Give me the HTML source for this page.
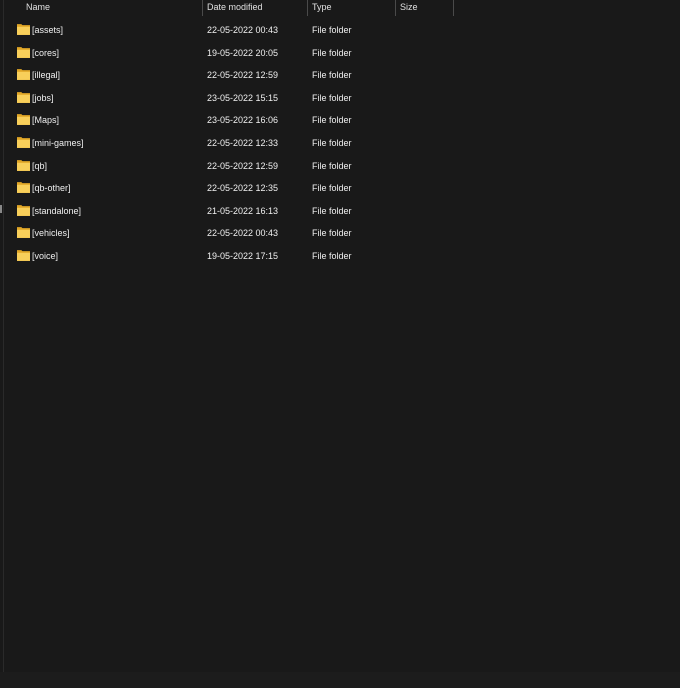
<!DOCTYPE html><html><head><style>
body{margin:0;width:680px;height:688px;background:#191919;overflow:hidden;position:relative;font-family:"Liberation Sans",sans-serif;font-size:9px;color:#f0f0f0}
.l{position:absolute;left:3px;top:0;width:1px;height:672px;background:#2a2a2a}
.b{position:absolute;left:0;top:672px;width:680px;height:16px;background:#1c1c1c}
.sep{position:absolute;top:0;width:1px;height:16px;background:#4a4a4a}
.h{position:absolute;top:2px;color:#e0e0e0}
.r{position:absolute;left:0;width:680px;height:22px}
.r span{position:absolute;top:0;line-height:22px}
.f{position:absolute;left:17px;top:5px;width:13px;height:11px}
</style></head><body>
<div class="l"></div><div class="b"></div>
<div style="position:absolute;left:0;top:205px;width:2px;height:8px;background:#888"></div>
<div class="h" style="left:26px">Name</div>
<div class="sep" style="left:202px"></div><div class="h" style="left:207px">Date modified</div>
<div class="sep" style="left:307px"></div><div class="h" style="left:312px">Type</div>
<div class="sep" style="left:395px"></div><div class="h" style="left:400px">Size</div>
<div class="sep" style="left:453px"></div>
<div class="r" style="top:19px"><svg class="f" viewBox="0 0 12 10"><path d="M0 0h4l1 1h7v9H0z" fill="#e0a526"/><path d="M0 2.5h12v7.5H0z" fill="#f8cf5a"/></svg><span style="left:32px">[assets]</span><span style="left:207px">22-05-2022 00:43</span><span style="left:312px">File folder</span></div>
<div class="r" style="top:42px"><svg class="f" viewBox="0 0 12 10"><path d="M0 0h4l1 1h7v9H0z" fill="#e0a526"/><path d="M0 2.5h12v7.5H0z" fill="#f8cf5a"/></svg><span style="left:32px">[cores]</span><span style="left:207px">19-05-2022 20:05</span><span style="left:312px">File folder</span></div>
<div class="r" style="top:64px"><svg class="f" viewBox="0 0 12 10"><path d="M0 0h4l1 1h7v9H0z" fill="#e0a526"/><path d="M0 2.5h12v7.5H0z" fill="#f8cf5a"/></svg><span style="left:32px">[illegal]</span><span style="left:207px">22-05-2022 12:59</span><span style="left:312px">File folder</span></div>
<div class="r" style="top:87px"><svg class="f" viewBox="0 0 12 10"><path d="M0 0h4l1 1h7v9H0z" fill="#e0a526"/><path d="M0 2.5h12v7.5H0z" fill="#f8cf5a"/></svg><span style="left:32px">[jobs]</span><span style="left:207px">23-05-2022 15:15</span><span style="left:312px">File folder</span></div>
<div class="r" style="top:109px"><svg class="f" viewBox="0 0 12 10"><path d="M0 0h4l1 1h7v9H0z" fill="#e0a526"/><path d="M0 2.5h12v7.5H0z" fill="#f8cf5a"/></svg><span style="left:32px">[Maps]</span><span style="left:207px">23-05-2022 16:06</span><span style="left:312px">File folder</span></div>
<div class="r" style="top:132px"><svg class="f" viewBox="0 0 12 10"><path d="M0 0h4l1 1h7v9H0z" fill="#e0a526"/><path d="M0 2.5h12v7.5H0z" fill="#f8cf5a"/></svg><span style="left:32px">[mini-games]</span><span style="left:207px">22-05-2022 12:33</span><span style="left:312px">File folder</span></div>
<div class="r" style="top:155px"><svg class="f" viewBox="0 0 12 10"><path d="M0 0h4l1 1h7v9H0z" fill="#e0a526"/><path d="M0 2.5h12v7.5H0z" fill="#f8cf5a"/></svg><span style="left:32px">[qb]</span><span style="left:207px">22-05-2022 12:59</span><span style="left:312px">File folder</span></div>
<div class="r" style="top:177px"><svg class="f" viewBox="0 0 12 10"><path d="M0 0h4l1 1h7v9H0z" fill="#e0a526"/><path d="M0 2.5h12v7.5H0z" fill="#f8cf5a"/></svg><span style="left:32px">[qb-other]</span><span style="left:207px">22-05-2022 12:35</span><span style="left:312px">File folder</span></div>
<div class="r" style="top:200px"><svg class="f" viewBox="0 0 12 10"><path d="M0 0h4l1 1h7v9H0z" fill="#e0a526"/><path d="M0 2.5h12v7.5H0z" fill="#f8cf5a"/></svg><span style="left:32px">[standalone]</span><span style="left:207px">21-05-2022 16:13</span><span style="left:312px">File folder</span></div>
<div class="r" style="top:222px"><svg class="f" viewBox="0 0 12 10"><path d="M0 0h4l1 1h7v9H0z" fill="#e0a526"/><path d="M0 2.5h12v7.5H0z" fill="#f8cf5a"/></svg><span style="left:32px">[vehicles]</span><span style="left:207px">22-05-2022 00:43</span><span style="left:312px">File folder</span></div>
<div class="r" style="top:245px"><svg class="f" viewBox="0 0 12 10"><path d="M0 0h4l1 1h7v9H0z" fill="#e0a526"/><path d="M0 2.5h12v7.5H0z" fill="#f8cf5a"/></svg><span style="left:32px">[voice]</span><span style="left:207px">19-05-2022 17:15</span><span style="left:312px">File folder</span></div>
</body></html>
